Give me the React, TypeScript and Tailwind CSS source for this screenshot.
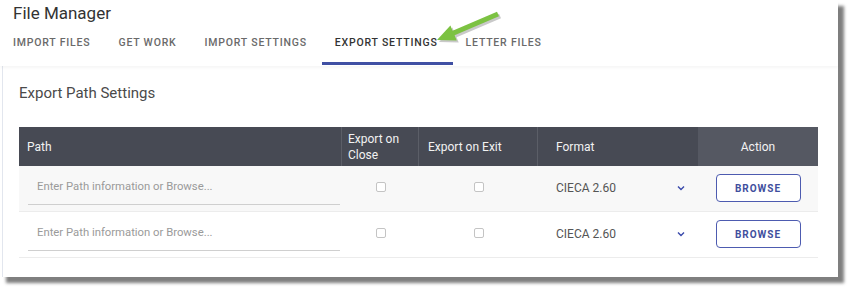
import React from 'react';

const tabs = ['IMPORT FILES', 'GET WORK', 'IMPORT SETTINGS', 'EXPORT SETTINGS', 'LETTER FILES'];
const activeTab = 'EXPORT SETTINGS';

const Checkbox = () => (
	<div className="w-[10px] h-[10px] border border-[#c4c4c4] rounded-[2px] bg-white" />
);

const Chevron = () => (
	<svg width="8" height="6" viewBox="0 0 8 6" fill="none">
		<path d="M1 1.5 L4 4.5 L7 1.5" stroke="#3949ab" strokeWidth="1.4" />
	</svg>
);

const ExportRow = ({ shaded }: { shaded: boolean }) => (
	<div className={`grid grid-cols-[323px_77px_119px_160px_120px] h-[46px] border-b border-[#ececec] ${shaded ? 'bg-[#f8f8f8]' : 'bg-white'}`}>
		<div className="pl-[9px] flex items-end pb-[6px]">
			<div className="w-[312px] h-[30px] border-b border-[#cfcfcf] flex items-center pl-[9px] pb-[4px] text-[11.3px] text-[#9a9a9a]">
				Enter Path information or Browse...
			</div>
		</div>
		<div className="flex items-center justify-center pb-[3px]"><Checkbox /></div>
		<div className="flex items-center justify-center pb-[3px]"><Checkbox /></div>
		<div className="flex items-center justify-between pl-[18px] pr-[13px] pb-[1px]">
			<span className="text-[12px] text-[#555]">CIECA 2.60</span>
			<Chevron />
		</div>
		<div className="flex items-center justify-center pb-[1px]">
			<button className="w-[85px] h-[28px] border border-[#4d5bb0] rounded-[4px] text-[10px] font-bold tracking-[1px] text-[#3f4f9e] bg-white">
				BROWSE
			</button>
		</div>
	</div>
);

const App = () => {
	return (
		<div className="w-[853px] h-[293px] bg-white relative font-['Roboto',sans-serif] overflow-hidden">
			<div className="w-[838px] h-[277px] bg-white shadow-[6px_6px_3px_rgba(0,0,0,0.5)] flex flex-col">
				<div className="h-[66px] shadow-[0_2px_3px_rgba(0,0,0,0.04)] relative z-10 bg-white">
					<div className="pt-[2px] pl-[13px] text-[17px] leading-[22px] text-[#333]">File Manager</div>
					<div className="flex">
						{tabs.map((t) => (
							<div key={t} className="flex flex-col">
								<div className={`h-[38px] flex items-center pl-[13px] pr-[15px] text-[10.5px] font-medium tracking-[0.8px] ${t === activeTab ? 'text-[#333]' : 'text-[#6a6a6a]'}`}>
									{t}
								</div>
								<div className={`h-[3px] ${t === activeTab ? 'bg-[#3f4fa3]' : ''}`} />
							</div>
						))}
					</div>
				</div>

				<div className="flex-1 ml-[2px] border-l border-[#e2e6ee]">
					<div className="pt-[18px] pl-[16px] text-[15px] leading-[18px] text-[#4a4a4a]">Export Path Settings</div>
					<div className="mt-[25px] ml-[16px] w-[799px]">
						<div className="grid grid-cols-[323px_77px_119px_160px_120px] h-[39px] bg-[#474a54] text-[12px] text-[#f2f2f2]">
							<div className="flex items-center pl-[8px] border-r border-[#5b5e67]">Path</div>
							<div className="flex items-center pl-[6px] leading-[16px] border-r border-[#5b5e67]">Export on<br />Close</div>
							<div className="flex items-center pl-[9px] border-r border-[#5b5e67]">Export on Exit</div>
							<div className="flex items-center pl-[18px]">Format</div>
							<div className="flex items-center justify-center bg-[#555862]">Action</div>
						</div>
						<ExportRow shaded />
						<ExportRow shaded={false} />
					</div>
				</div>
			</div>

			<div className="absolute left-[802px] top-0 w-[11px] h-[3px] bg-[#d9251c]" />
			<div className="absolute left-[814px] top-0 w-[20px] h-[2px] bg-[#c9c2a8]" />

			<svg className="absolute left-0 top-0 z-20 pointer-events-none" width="853" height="293">
				<polygon
					points="497,11.7 452.6,30.7 450.4,25.6 437,40 456.7,40.4 454.6,35.3 499,16.3"
					fill="#888"
					opacity="0.45"
					transform="translate(2,2)"
				/>
				<polygon
					points="497,11.7 452.6,30.7 450.4,25.6 437,40 456.7,40.4 454.6,35.3 499,16.3"
					fill="#7cc242"
				/>
			</svg>
		</div>
	);
};

export default App;
